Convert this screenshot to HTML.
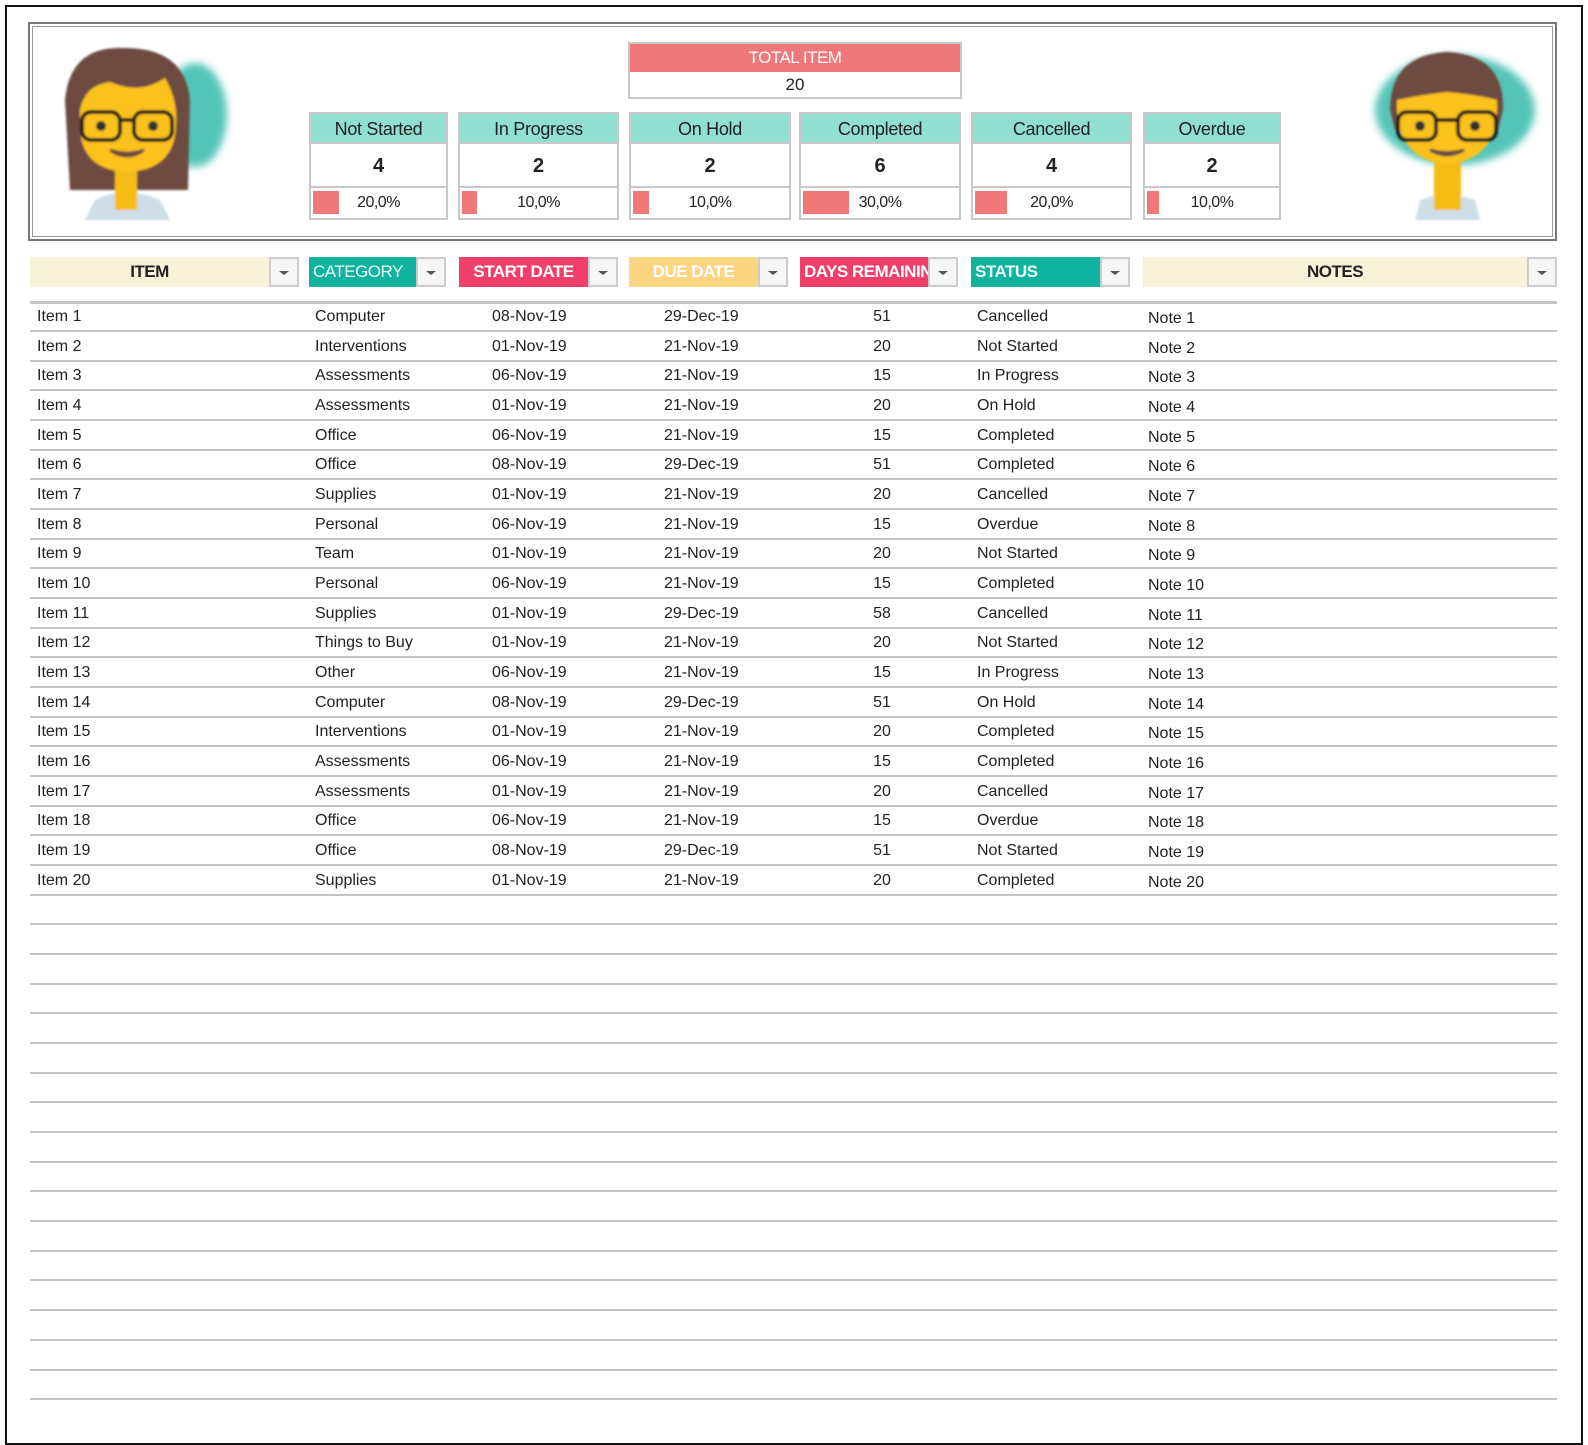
<!DOCTYPE html>
<html><head><meta charset="utf-8"><style>
*{margin:0;padding:0;box-sizing:border-box}
body{width:1588px;height:1408px;background:#fff;position:relative;overflow:hidden;font-family:"Liberation Sans",sans-serif;color:#222}
.a{position:absolute}
.frame{left:5px;top:5px;width:1578px;height:1440px;border:2px solid #111}
.dash{left:28px;top:22px;width:1529px;height:219px;border:2px solid #777}
.dash2{left:32px;top:26px;width:1521px;height:211px;border:1.5px solid #999}
.tot{left:628px;top:42px;width:334px;height:57px;border:2px solid #c8c8c8}
.toth{height:28px;background:#f07878;color:#fff;text-align:center;font-size:17px;line-height:28px;letter-spacing:-0.5px}
.totv{height:25px;text-align:center;font-size:17px;line-height:25px}
.card{top:112px;height:108px;border:2px solid #c8c8c8}
.ch{height:30px;background:#90dfcf;text-align:center;font-size:18px;line-height:30px;border-bottom:2px solid #c8c8c8;letter-spacing:-0.3px}
.cn{height:44px;text-align:center;font-weight:bold;font-size:20px;line-height:44px;border-bottom:2px solid #c8c8c8}
.cp{height:30px;position:relative;text-align:center;font-size:16px;line-height:30px;letter-spacing:-0.5px}
.bar{position:absolute;left:2px;top:3px;height:23px;background:#f07878}
.hd{top:257px;height:30px;font-size:17px;font-weight:bold;line-height:30px;letter-spacing:-0.5px;overflow:hidden;white-space:nowrap}
.btn{top:257px;width:30px;height:30px;background:#f6f6f6;border:2px solid #ccc}
.btn:after{content:"";position:absolute;left:8px;top:12px;border-left:5px solid transparent;border-right:5px solid transparent;border-top:4px solid #555}
.hl{left:30px;width:1527px;height:2px;background:#c4c4c4}
.r{position:absolute;font-size:16px;line-height:20px;white-space:nowrap}
</style></head><body>
<div class="a frame"></div>
<div class="a dash"></div><div class="a dash2"></div>

<svg class="a" style="left:40px;top:30px" width="200" height="200" viewBox="40 30 200 200">
<defs><filter id="b" x="-30%" y="-30%" width="160%" height="160%"><feGaussianBlur stdDeviation="4"/></filter><filter id="b2"><feGaussianBlur stdDeviation="1"/></filter></defs>
<ellipse cx="195" cy="115" rx="32" ry="52" fill="#55c4b8" filter="url(#b)"/>
<g filter="url(#b2)">
<path d="M70 190 L65 100 Q70 45 125 48 Q185 48 190 100 L188 190 Z" fill="#6d4c41"/>
<path d="M95 200 Q125 185 160 200 L170 220 L85 220 Z" fill="#cfdde6"/>
<rect x="115" y="160" width="22" height="50" fill="#f6bc18"/>
<path d="M80 110 Q85 85 110 82 Q140 95 165 78 Q178 100 176 125 Q175 170 127 172 Q80 170 80 125 Z" fill="#fbc11b"/>
<rect x="82" y="112" width="38" height="28" rx="9" fill="none" stroke="#1a1a1a" stroke-width="4"/>
<rect x="134" y="112" width="38" height="28" rx="9" fill="none" stroke="#1a1a1a" stroke-width="4"/>
<path d="M120 120 L134 120" stroke="#1a1a1a" stroke-width="4"/>
<circle cx="101" cy="126" r="5" fill="#333"/><circle cx="153" cy="126" r="5" fill="#333"/>
<path d="M110 150 Q127 162 144 150 Q127 156 110 150Z" fill="#6d4c41" stroke="#6d4c41" stroke-width="3"/>
</g></svg>

<svg class="a" style="left:1340px;top:30px" width="215" height="200" viewBox="1340 30 215 200">
<ellipse cx="1455" cy="110" rx="80" ry="55" fill="#55c4b8" filter="url(#b)"/>
<g filter="url(#b2)">
<path d="M1420 200 Q1447 190 1475 200 L1480 220 L1415 220 Z" fill="#cfdde6"/>
<rect x="1434" y="155" width="27" height="55" fill="#f6bc18"/>
<path d="M1390 110 Q1390 55 1447 52 Q1505 55 1503 110 L1498 130 L1395 130 Z" fill="#6d4c41"/>
<path d="M1397 100 Q1420 95 1447 92 Q1480 95 1497 100 Q1500 160 1447 164 Q1395 160 1397 100Z" fill="#fbc11b"/>
<rect x="1398" y="112" width="38" height="28" rx="9" fill="none" stroke="#1a1a1a" stroke-width="4"/>
<rect x="1458" y="112" width="38" height="28" rx="9" fill="none" stroke="#1a1a1a" stroke-width="4"/>
<path d="M1436 120 L1458 120" stroke="#1a1a1a" stroke-width="4"/>
<circle cx="1420" cy="126" r="5" fill="#333"/><circle cx="1475" cy="126" r="5" fill="#333"/>
<path d="M1430 150 Q1447 160 1464 150 Q1447 155 1430 150Z" fill="#6d4c41" stroke="#6d4c41" stroke-width="3"/>
</g></svg>

<div class="a tot"><div class="toth">TOTAL ITEM</div><div class="totv">20</div></div>

<div class="a card" style="left:309px;width:139px"><div class="ch">Not Started</div><div class="cn">4</div><div class="cp"><div class="bar" style="width:26px"></div>20,0%</div></div>
<div class="a card" style="left:458px;width:161px"><div class="ch">In Progress</div><div class="cn">2</div><div class="cp"><div class="bar" style="width:15px"></div>10,0%</div></div>
<div class="a card" style="left:629px;width:162px"><div class="ch">On Hold</div><div class="cn">2</div><div class="cp"><div class="bar" style="width:16px"></div>10,0%</div></div>
<div class="a card" style="left:799px;width:162px"><div class="ch">Completed</div><div class="cn">6</div><div class="cp"><div class="bar" style="width:46px"></div>30,0%</div></div>
<div class="a card" style="left:971px;width:161px"><div class="ch">Cancelled</div><div class="cn">4</div><div class="cp"><div class="bar" style="width:32px"></div>20,0%</div></div>
<div class="a card" style="left:1143px;width:138px"><div class="ch">Overdue</div><div class="cn">2</div><div class="cp"><div class="bar" style="width:12px"></div>10,0%</div></div>

<div class="a hd" style="left:30px;width:239px;background:#f8f2d8;text-align:center">ITEM</div><div class="a btn" style="left:269px"></div>
<div class="a hd" style="left:309px;width:107px;background:#12b2a0;color:#eafff8;padding-left:4px;font-weight:normal">CATEGORY</div><div class="a btn" style="left:416px"></div>
<div class="a hd" style="left:459px;width:129px;background:#f0406a;color:#fff;text-align:center">START DATE</div><div class="a btn" style="left:588px"></div>
<div class="a hd" style="left:629px;width:129px;background:#fbd580;color:#fff;text-align:center">DUE DATE</div><div class="a btn" style="left:758px"></div>
<div class="a hd" style="left:800px;width:128px;background:#f0406a;color:#fff;padding-left:4px">DAYS REMAINING</div><div class="a btn" style="left:928px"></div>
<div class="a hd" style="left:971px;width:129px;background:#12b2a0;color:#eafff8;padding-left:4px">STATUS</div><div class="a btn" style="left:1100px"></div>
<div class="a hd" style="left:1143px;width:384px;background:#f8f2d8;text-align:center">NOTES</div><div class="a btn" style="left:1527px"></div>

<div class="a hl" style="top:301px;height:3px"></div>
<div id="rows"></div>
<script>
var d=[["Computer","08-Nov-19","29-Dec-19","51","Cancelled"],["Interventions","01-Nov-19","21-Nov-19","20","Not Started"],["Assessments","06-Nov-19","21-Nov-19","15","In Progress"],["Assessments","01-Nov-19","21-Nov-19","20","On Hold"],["Office","06-Nov-19","21-Nov-19","15","Completed"],["Office","08-Nov-19","29-Dec-19","51","Completed"],["Supplies","01-Nov-19","21-Nov-19","20","Cancelled"],["Personal","06-Nov-19","21-Nov-19","15","Overdue"],["Team","01-Nov-19","21-Nov-19","20","Not Started"],["Personal","06-Nov-19","21-Nov-19","15","Completed"],["Supplies","01-Nov-19","29-Dec-19","58","Cancelled"],["Things to Buy","01-Nov-19","21-Nov-19","20","Not Started"],["Other","06-Nov-19","21-Nov-19","15","In Progress"],["Computer","08-Nov-19","29-Dec-19","51","On Hold"],["Interventions","01-Nov-19","21-Nov-19","20","Completed"],["Assessments","06-Nov-19","21-Nov-19","15","Completed"],["Assessments","01-Nov-19","21-Nov-19","20","Cancelled"],["Office","06-Nov-19","21-Nov-19","15","Overdue"],["Office","08-Nov-19","29-Dec-19","51","Not Started"],["Supplies","01-Nov-19","21-Nov-19","20","Completed"]];
var h="",H=29.67;
for(var k=0;k<37;k++){h+='<div class="a hl" style="top:'+(330+k*H).toFixed(1)+'px"></div>';}
for(var i=0;i<20;i++){var t=(307+i*H).toFixed(1),r=d[i];
h+='<div class="r" style="left:37px;top:'+t+'px">Item '+(i+1)+'</div>';
h+='<div class="r" style="left:315px;top:'+t+'px">'+r[0]+'</div>';
h+='<div class="r" style="left:492px;top:'+t+'px">'+r[1]+'</div>';
h+='<div class="r" style="left:664px;top:'+t+'px">'+r[2]+'</div>';
h+='<div class="r" style="left:862px;width:40px;text-align:center;top:'+t+'px">'+r[3]+'</div>';
h+='<div class="r" style="left:977px;top:'+t+'px">'+r[4]+'</div>';
h+='<div class="r" style="left:1148px;top:'+(+t+2)+'px">Note '+(i+1)+'</div>';}
document.getElementById("rows").innerHTML=h;
</script>
</body></html>
